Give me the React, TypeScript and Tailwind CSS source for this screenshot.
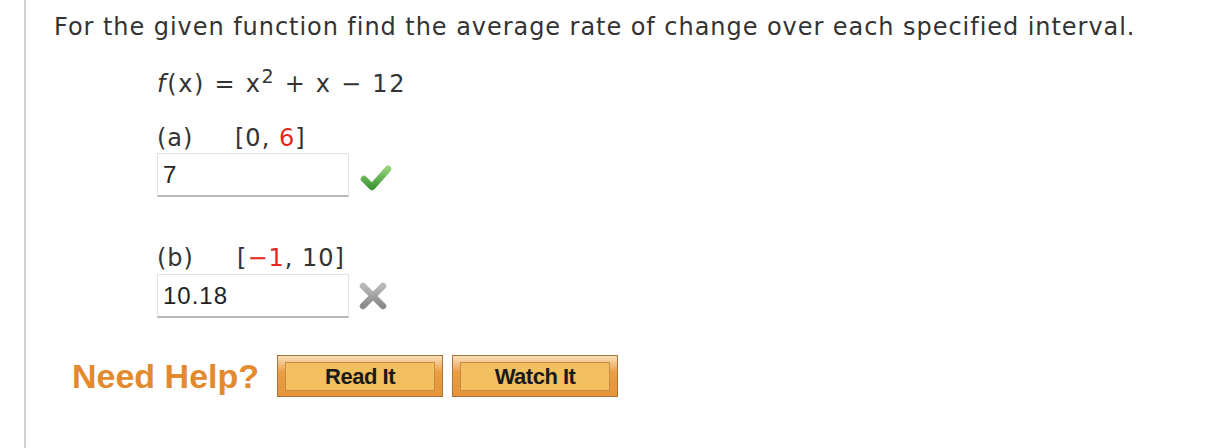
import React from 'react';

function CheckMark() {
  return (
    <svg width="32" height="30" viewBox="0 0 32 30" className="block">
      <defs>
        <linearGradient id="ck" x1="0" y1="0" x2="0" y2="1">
          <stop offset="0" stopColor="#8fd174" />
          <stop offset="1" stopColor="#3e9636" />
        </linearGradient>
      </defs>
      <path d="M4 16 L12 24 L28 6" fill="none" stroke="url(#ck)" strokeWidth="6.5" strokeLinecap="round" strokeLinejoin="round" />
    </svg>
  );
}

function CrossMark() {
  return (
    <svg width="30" height="30" viewBox="0 0 30 30" className="block">
      <defs>
        <linearGradient id="cx" x1="0" y1="0" x2="0" y2="1">
          <stop offset="0" stopColor="#b8b8b8" />
          <stop offset="1" stopColor="#8a8a8a" />
        </linearGradient>
      </defs>
      <path d="M5 5 L25 25 M25 5 L5 25" fill="none" stroke="url(#cx)" strokeWidth="6.5" strokeLinecap="round" />
    </svg>
  );
}

function AnswerBox({ value, mark }: { value: string; mark: 'ok' | 'bad' }) {
  return (
    <div className="flex items-center">
      <div className="w-[192px] h-[44px] border border-[#e2e2e2] border-b-2 border-b-[#b9b9b9] bg-white flex items-center pl-[5px] text-[24px] text-[#222] font-['Liberation_Sans',Arial,sans-serif]">
        {value}
      </div>
      <div className={mark === 'ok' ? 'ml-[11px] mt-[6px]' : 'ml-[9px]'}>
        {mark === 'ok' ? <CheckMark /> : <CrossMark />}
      </div>
    </div>
  );
}

function HelpButton({ label }: { label: string }) {
  return (
    <div className="w-[166px] h-[42px] border border-[#a6733a] bg-linear-to-b from-[#f8e0b8] via-[#eb9e42] via-40% to-[#e6943a] px-[7px] pt-[6px] pb-[5px]">
      <div className="h-full border border-[#c48a46] bg-[#f2c05e] flex items-center justify-center text-[22px] font-bold text-[#1a1a1a] tracking-[-0.5px] font-['Liberation_Sans',Arial,sans-serif]">
        {label}
      </div>
    </div>
  );
}

export default function App() {
  return (
    <div className="min-h-[448px] bg-white font-['DejaVu_Sans',Verdana,sans-serif] text-[#333]">
      <div className="ml-[24px] min-h-[448px] border-l-2 border-[#d2d2d2] pl-[28px] pt-[12px]">
        <p className="text-[24px] leading-[30px] tracking-[0.95px]">
          For the given function find the average rate of change over each specified interval.
        </p>

        <div className="ml-[103px] mt-[27px] text-[24px] leading-[30px] tracking-[1px]">
          <div className="tracking-[1.7px]">
            <span className="italic">f</span>(x) = x<sup className="text-[19px]">2</sup> + x − 12
          </div>

          <div className="mt-[24px] flex">
            <span className="w-[78px]">(a)</span>
            <span>[0, <span className="text-[#e3271d]">6</span>]</span>
          </div>
          <AnswerBox value="7" mark="ok" />

          <div className="mt-[46px] flex">
            <span className="w-[80px]">(b)</span>
            <span>[<span className="text-[#e3271d]">−1</span>, 10]</span>
          </div>
          <div className="mt-[1px]">
            <AnswerBox value="10.18" mark="bad" />
          </div>
        </div>

        <div className="mt-[37px] ml-[18px] flex items-center">
          <span className="text-[34px] leading-[42px] font-bold text-[#e38a2e] font-['Liberation_Sans',Arial,sans-serif] mr-[18px]">
            Need Help?
          </span>
          <div className="flex gap-[9px]">
            <HelpButton label="Read It" />
            <HelpButton label="Watch It" />
          </div>
        </div>
      </div>
    </div>
  );
}
